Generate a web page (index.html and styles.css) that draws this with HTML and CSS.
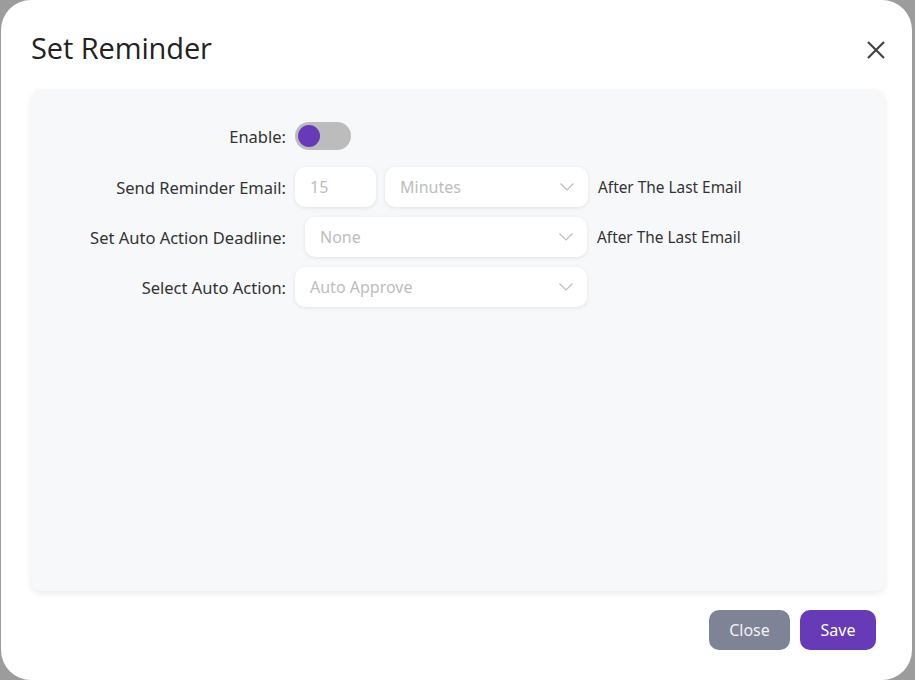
FILE: index.html
```html
<!DOCTYPE html>
<html>
<head>
<meta charset="utf-8">
<link rel="stylesheet" href="styles.css">
</head>
<body>
<div class="dialog">
  <div class="header">
    <h1 class="title">Set Reminder</h1>
    <button class="close-x" aria-label="Close">
      <svg width="20" height="20" viewBox="0 0 20 20"><path d="M2 2L18 18M18 2L2 18" stroke="#444" stroke-width="2.2" fill="none"/></svg>
    </button>
  </div>
  <div class="panel">
    <div class="row row-enable">
      <span class="label">Enable:</span>
      <div class="toggle"><span class="knob"></span></div>
    </div>
    <div class="row">
      <span class="label">Send Reminder Email:</span>
      <div class="field num">15</div>
      <div class="field select w-minutes"><span>Minutes</span><svg class="chev" width="14" height="8" viewBox="0 0 14 8"><path d="M0.5 0.5L7 7L13.5 0.5" stroke="#bdbdbd" stroke-width="1.2" fill="none"/></svg></div>
      <span class="suffix">After The Last Email</span>
    </div>
    <div class="row">
      <span class="label">Set Auto Action Deadline:</span>
      <div class="field select w-none"><span>None</span><svg class="chev" width="14" height="8" viewBox="0 0 14 8"><path d="M0.5 0.5L7 7L13.5 0.5" stroke="#bdbdbd" stroke-width="1.2" fill="none"/></svg></div>
      <span class="suffix">After The Last Email</span>
    </div>
    <div class="row">
      <span class="label">Select Auto Action:</span>
      <div class="field select w-auto"><span>Auto Approve</span><svg class="chev" width="14" height="8" viewBox="0 0 14 8"><path d="M0.5 0.5L7 7L13.5 0.5" stroke="#bdbdbd" stroke-width="1.2" fill="none"/></svg></div>
    </div>
  </div>
  <div class="footer">
    <button class="btn btn-close">Close</button>
    <button class="btn btn-save">Save</button>
  </div>
</div>
</body>
</html>
```

FILE: styles.css
```css
html, body {
  margin: 0;
  padding: 0;
  height: 100%;
  background: #9c9c9c;
  overflow: hidden;
}
body {
  font-family: "Noto Sans", "Open Sans", sans-serif;
}
.dialog {
  margin-left: 1px;
  width: 911px;
  height: 680px;
  background: #fff;
  border-radius: 30px;
  box-sizing: border-box;
  padding: 0 30px 0 30px;
  display: flex;
  flex-direction: column;
}
.header {
  height: 89px;
  display: flex;
  align-items: flex-start;
  justify-content: space-between;
}
.title {
  margin: 28px 0 0 0;
  font-family: "Open Sans", "Noto Sans", sans-serif;
  font-weight: 400;
  font-size: 29px;
  line-height: 40px;
  color: #222;
  letter-spacing: -0.1px;
}
.close-x {
  margin: 40px -4px 0 0;
  padding: 0;
  border: none;
  background: none;
  width: 20px;
  height: 20px;
  display: block;
}
.close-x svg { display: block; }
.panel {
  height: 502px;
  background: #f7f8fa;
  border-radius: 10px;
  box-shadow: 0 3px 6px rgba(0,0,0,0.08);
  box-sizing: border-box;
  padding: 27px 0 0 0;
  display: flex;
  flex-direction: column;
  gap: 10px;
  margin-right: -3px;
}
.row {
  display: flex;
  align-items: center;
  height: 40px;
}
.row-enable {
  height: 40px;
  margin-bottom: 1px;
}
.label {
  width: 255px;
  text-align: right;
  font-size: 16.5px;
  color: #333;
  margin-right: 9px;
  white-space: nowrap;
}
.toggle {
  width: 56px;
  height: 28px;
  border-radius: 14px;
  background: #bcbcbc;
  box-sizing: border-box;
  padding: 3px;
  display: flex;
  align-items: center;
}
.knob {
  width: 22px;
  height: 22px;
  border-radius: 50%;
  background: #673ab7;
}
.field {
  height: 40px;
  background: #fff;
  border-radius: 10px;
  box-shadow: 0 1px 4px rgba(0,0,0,0.09);
  box-sizing: border-box;
  display: flex;
  align-items: center;
  font-size: 16px;
  color: #bdbdbd;
  padding: 0 15px;
}
.num { width: 81px; }
.select { justify-content: space-between; }
.chev { display: block; margin-right: -1px; }
.w-minutes { width: 203px; margin-left: 9px; }
.w-none { width: 282px; margin-left: 10px; }
.w-auto { width: 292px; }
.suffix {
  margin-left: 10px;
  font-size: 15.4px;
  color: #333;
  white-space: nowrap;
}
.footer {
  display: flex;
  justify-content: flex-end;
  gap: 10px;
  padding-top: 19px;
  margin-right: 6px;
}
.btn {
  height: 40px;
  border: none;
  border-radius: 10px;
  font-family: "Noto Sans", "Open Sans", sans-serif;
  font-size: 16px;
  color: #fff;
  padding: 0;
}
.btn-close { width: 81px; background: #7e8396; color: #f2f2f2; }
.btn-save { width: 76px; background: #673ab7; }
```
